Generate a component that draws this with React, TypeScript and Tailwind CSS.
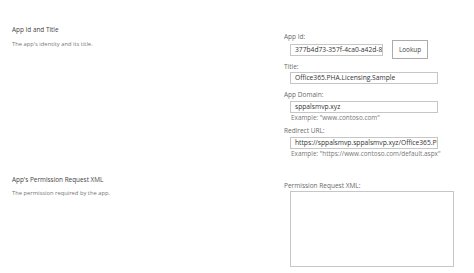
import React from 'react';

const Field: React.FC<{ label: string; className?: string; children: React.ReactNode }> = ({ label, className = '', children }) => (
  <div className={className}>
    <div className="text-[6.5px] leading-[9px] text-[#6a6a6a]">{label}</div>
    <div className="pl-[6px]">{children}</div>
  </div>
);

const TextBox: React.FC<{ value: string; width: string }> = ({ value, width }) => (
  <div className={`${width} h-[12px] border border-[#c6c6c6] bg-white px-[4px] text-[6.7px] leading-[10px] text-[#333] whitespace-nowrap overflow-hidden`}>
    {value}
  </div>
);

const Example: React.FC<{ text: string }> = ({ text }) => (
  <div className="text-[6.4px] leading-[9px] text-[#777] pl-[1px]">{text}</div>
);

export default function App() {
  return (
    <div className="w-[474px] h-[273px] bg-white overflow-hidden" style={{ fontFamily: '"Open Sans", "Noto Sans", sans-serif' }}>
      {/* App Id and Title */}
      <div className="flex pt-[25px]">
        <div className="w-[284px] pl-[12px]">
          <div className="text-[6.4px] leading-[9px] text-[#444]">App Id and Title</div>
          <div className="mt-[6px] text-[5.8px] leading-[8px] text-[#777]">The app's identity and its title.</div>
        </div>
        <div className="flex-1 pt-[7px]">
          <Field label="App Id:">
            <div className="flex items-center gap-[9px] -mt-[1px]">
              <TextBox value="377b4d73-357f-4ca0-a42d-8" width="w-[93px]" />
              <button className="w-[36px] h-[19px] border border-[#ababab] bg-white text-[6.4px] text-[#444]">Lookup</button>
            </div>
          </Field>
          <Field label="Title:" className="mt-[3px]">
            <div className="mt-[1px]">
              <TextBox value="Office365.PHA.Licensing.Sample" width="w-[148px]" />
            </div>
          </Field>
          <Field label="App Domain:" className="mt-[6px]">
            <div className="mt-[2px]">
              <TextBox value="sppalsmvp.xyz" width="w-[148px]" />
              <Example text={'Example: "www.contoso.com"'} />
            </div>
          </Field>
          <Field label="Redirect URL:" className="mt-[4px]">
            <div className="mt-[2px]">
              <TextBox value="https://sppalsmvp.sppalsmvp.xyz/Office365.PHA.Licensing.Sample" width="w-[148px]" />
              <Example text={'Example: "https://www.contoso.com/default.aspx"'} />
            </div>
          </Field>
        </div>
      </div>

      {/* App's Permission Request XML */}
      <div className="flex pt-[17px]">
        <div className="w-[284px] pl-[12px]">
          <div className="text-[6.4px] leading-[9px] text-[#444]">App's Permission Request XML</div>
          <div className="mt-[5px] text-[5.8px] leading-[8px] text-[#777]">The permission required by the app.</div>
        </div>
        <div className="flex-1 pt-[6px]">
          <Field label="Permission Request XML:">
            <div className="mt-[1px] w-[164px] h-[76px] border border-[#c6c6c6] bg-white" />
          </Field>
        </div>
      </div>
    </div>
  );
}
